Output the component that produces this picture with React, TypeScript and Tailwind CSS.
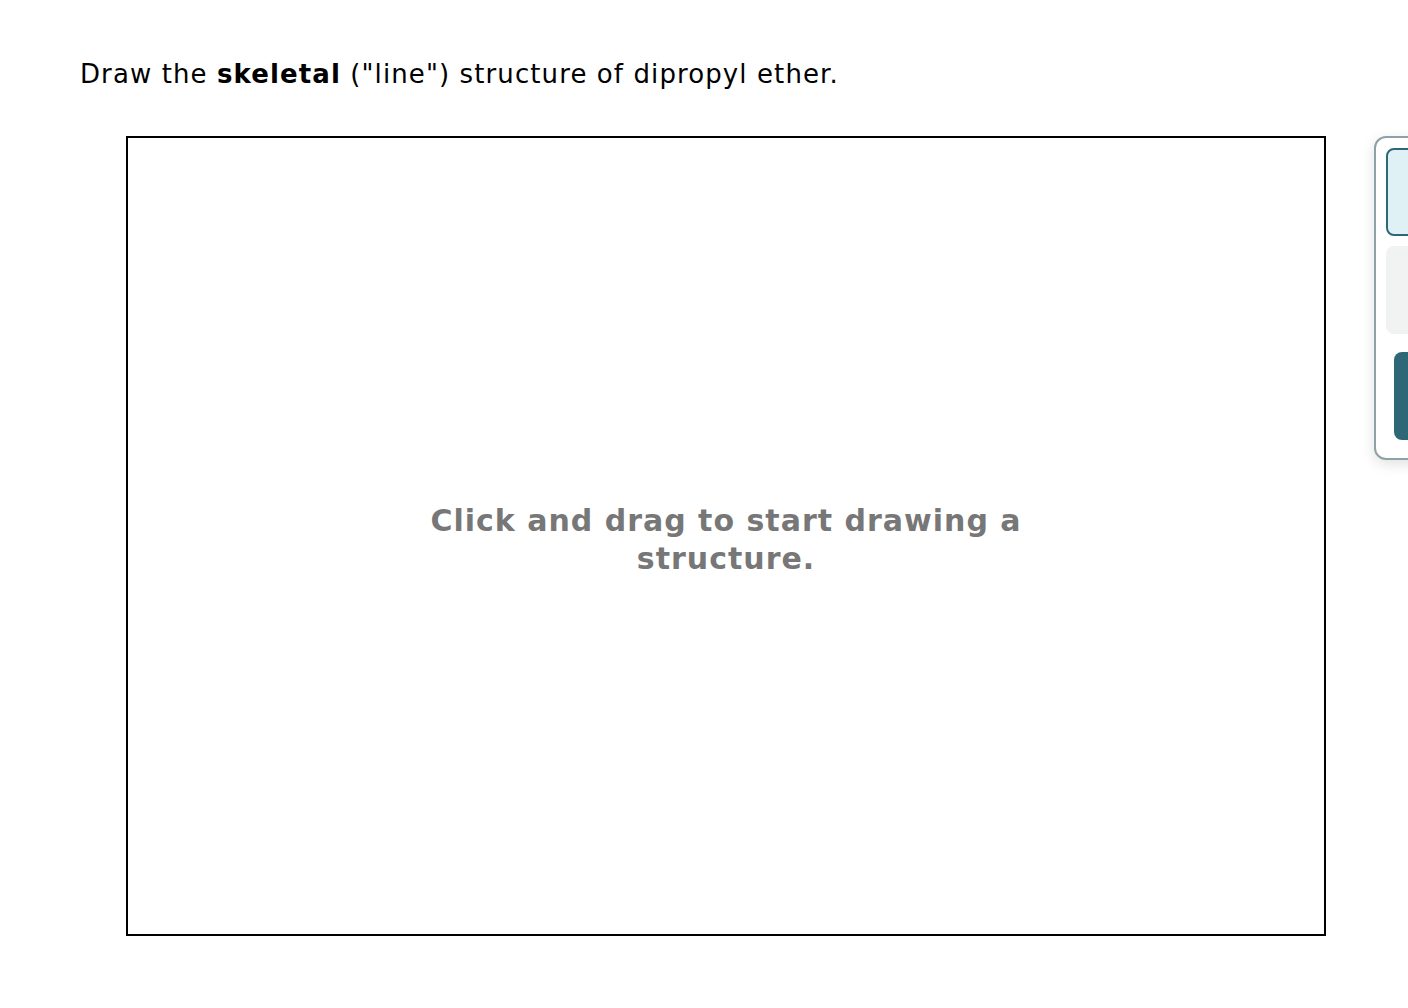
/**
 * Skeletal structure drawing question.
 */

const SidePanel = () => (
  <div className="ml-12 shrink-0 w-[120px] h-[324px] rounded-xl border-2 border-[#8ea1a9] bg-white shadow-[0_4px_14px_rgba(0,0,0,0.12)] pt-[10px] pl-[10px] flex flex-col">
    <div className="h-[88px] rounded-lg border-2 border-[#2e6776] bg-[#dff1f5]" />
    <div className="mt-[10px] h-[88px] rounded-lg bg-[#f1f2f2]" />
    <div className="mt-[18px] ml-2 h-[88px] rounded-lg bg-[#2e6776]" />
  </div>
);

const Canvas = () => (
  <div className="ml-[46px] shrink-0 w-[1200px] h-[800px] border-2 border-black bg-white flex items-center justify-center">
    <p className="w-[640px] pt-2 text-center text-[30px] leading-[38px] tracking-[1px] font-bold text-[#777777]">
      Click and drag to start drawing a structure.
    </p>
  </div>
);

export default function App() {
  return (
    <div className="w-full min-h-screen overflow-hidden bg-white font-['DejaVu_Sans',Verdana,sans-serif] pl-20 pt-[56px]">
      <h1 className="text-[26px] leading-[36px] tracking-[1.1px] text-black">
        Draw the <b className="font-bold">skeletal</b> ("line") structure of dipropyl ether.
      </h1>
      <div className="mt-[44px] flex items-start">
        <Canvas />
        <SidePanel />
      </div>
    </div>
  );
}
